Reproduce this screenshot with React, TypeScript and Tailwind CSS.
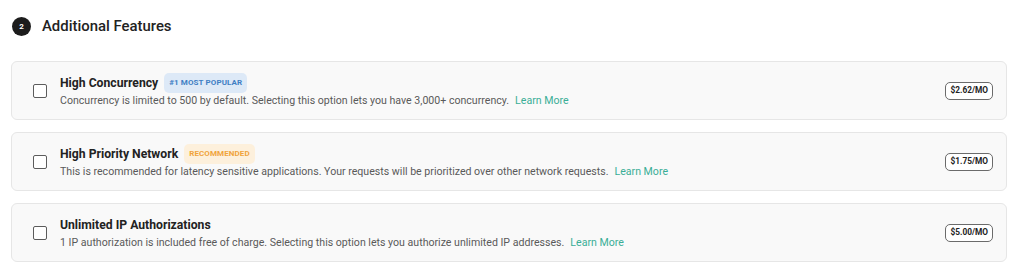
import React from 'react';

interface Feature {
  id: string;
  title: string;
  badge?: { label: string; tone: 'blue' | 'orange' };
  description: string;
  price: string;
}

const features: Feature[] = [
  {
    id: 'concurrency',
    title: 'High Concurrency',
    badge: { label: '#1 MOST POPULAR', tone: 'blue' },
    description:
      'Concurrency is limited to 500 by default. Selecting this option lets you have 3,000+ concurrency.',
    price: '$2.62/MO',
  },
  {
    id: 'priority',
    title: 'High Priority Network',
    badge: { label: 'RECOMMENDED', tone: 'orange' },
    description:
      'This is recommended for latency sensitive applications. Your requests will be prioritized over other network requests.',
    price: '$1.75/MO',
  },
  {
    id: 'ip',
    title: 'Unlimited IP Authorizations',
    description:
      '1 IP authorization is included free of charge. Selecting this option lets you authorize unlimited IP addresses.',
    price: '$5.00/MO',
  },
];

const FeatureCard: React.FC<{ feature: Feature }> = ({ feature }) => {
  return (
    <div className="flex items-center h-[59px] pl-[21px] pr-[13px] bg-[#f9f9f9] border border-[#e6e6e6] rounded-[6px]">
      <div className="w-[14px] h-[14px] border-[1.5px] border-[#5c5c5c] rounded-[2px] bg-white flex-shrink-0" />
      <div className="ml-[13px] flex-1 min-w-0">
        <div className="flex items-center h-[20px]">
          <span className="text-[12.2px] font-bold text-[#222] leading-none">{feature.title}</span>
          {feature.badge && (
            <span
              className={`ml-[6px] h-[20px] px-[5px] rounded-[5px] flex items-center text-[8px] font-bold tracking-[0.1px] ${
                feature.badge.tone === 'blue'
                  ? 'bg-[#dde9f7] text-[#3f7fc4]'
                  : 'bg-[#fdf0dc] text-[#f0a43c]'
              }`}
            >
              {feature.badge.label}
            </span>
          )}
        </div>
        <p className="mt-[1px] text-[10.6px] leading-[14px] text-[#5a5a5a]">
          {feature.description}
          <span className="ml-[6px] text-[#3aae97]">Learn More</span>
        </p>
      </div>
      <span className="h-[18px] px-[4px] border border-[#6b6b6b] rounded-[5px] bg-white flex items-center text-[8.3px] font-bold text-[#222]">
        {feature.price}
      </span>
    </div>
  );
};

const App: React.FC = () => {
  return (
    <div className="w-[1024px] h-[274px] bg-white font-['Roboto',sans-serif] px-[11px] pt-[17px] overflow-hidden">
      <div className="flex items-center h-[19px] ml-[1px]">
        <div className="w-[19px] h-[19px] rounded-full bg-[#1c1c1c] text-white text-[8px] font-bold flex items-center justify-center">
          2
        </div>
        <h2 className="ml-[11px] text-[14.9px] font-medium text-[#222] leading-none">Additional Features</h2>
      </div>
      <div className="mt-[25px] w-[996px] flex flex-col gap-[12px]">
        {features.map((f) => (
          <FeatureCard key={f.id} feature={f} />
        ))}
      </div>
    </div>
  );
};

export default App;
